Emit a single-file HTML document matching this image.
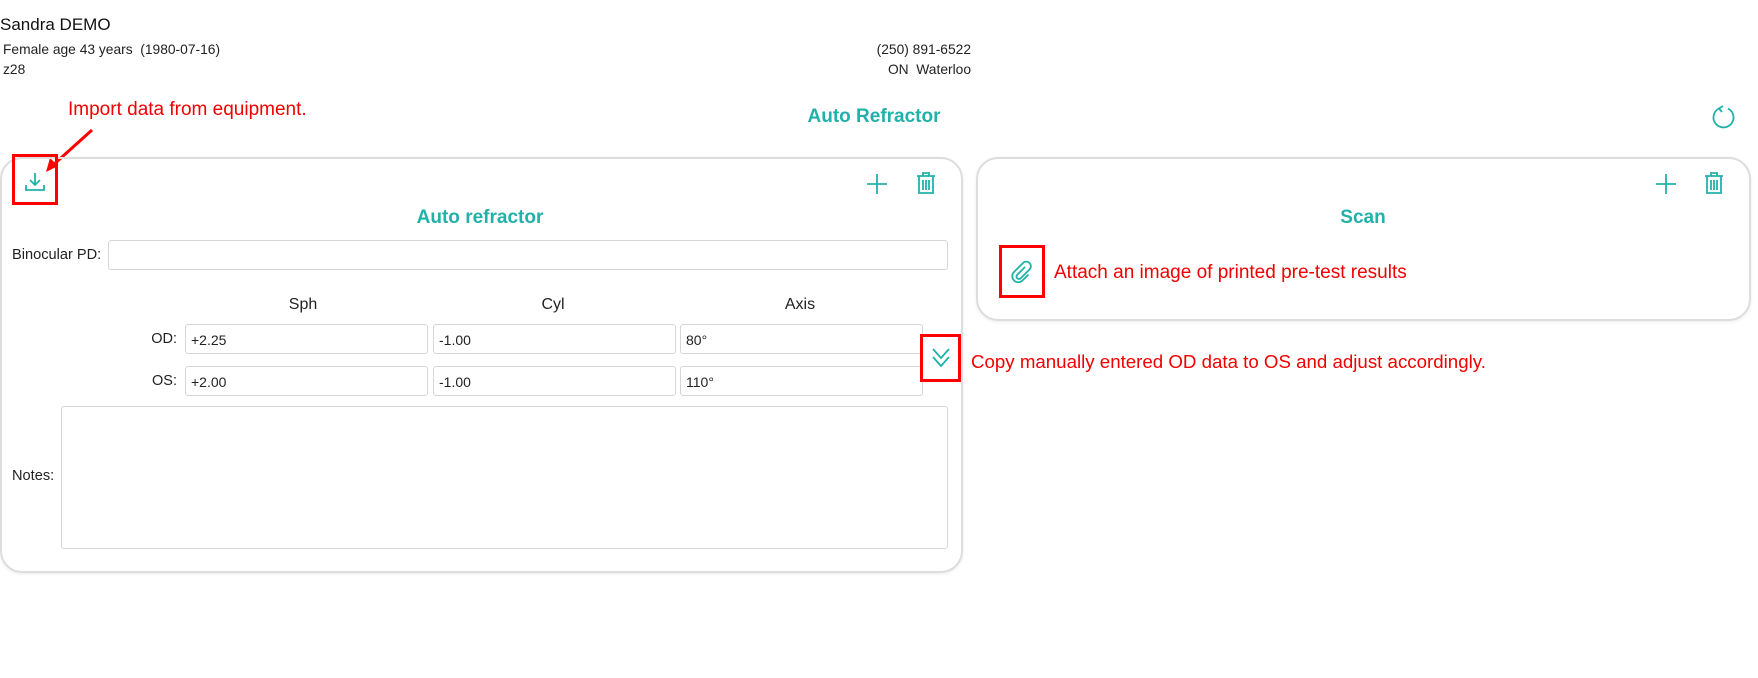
<!DOCTYPE html>
<html><head><meta charset="utf-8"><style>
*{box-sizing:border-box;margin:0;padding:0}
body{width:1758px;height:678px;background:#fff;font-family:"Liberation Sans",sans-serif;color:#222;position:relative;overflow:hidden}
.a{position:absolute;white-space:nowrap}
.teal{color:#20b2aa}
.red{color:#f00000}
.card{position:absolute;border:2px solid #ddd;border-radius:22px;box-shadow:0 1px 3px rgba(0,0,0,.08)}
.inp{position:absolute;border:1px solid #d6d6d6;border-radius:3px;height:30px;font-size:14px;padding:7px 5px;color:#222}
.box{position:absolute;border:3px solid #f00}
</style></head><body>
<div class="a" style="left:0;top:15px;font-size:17px;color:#111">Sandra DEMO</div>
<div class="a" style="left:3px;top:42px;font-size:13.8px">Female age 43 years&nbsp; (1980-07-16)</div>
<div class="a" style="left:3px;top:62px;font-size:13.8px">z28</div>
<div class="a" style="right:787px;top:42px;font-size:13.8px">(250) 891-6522</div>
<div class="a" style="right:787px;top:62px;font-size:13.8px">ON&nbsp; Waterloo</div>
<div class="a red" style="left:68px;top:99px;font-size:19px">Import data from equipment.</div>
<div class="a teal" style="left:874px;top:106px;font-size:19px;font-weight:bold;transform:translateX(-50%)">Auto Refractor</div>
<svg class="a" style="left:1711px;top:104px" width="26" height="26" viewBox="0 0 26 26" fill="none" stroke="#20b2aa" stroke-width="1.8"><path d="M17 4.5A10 10 0 1 1 8 4.5"/><path d="M12 2l-4 2.5 3 3.5"/></svg>
<svg class="a" style="left:0;top:0" width="120" height="200"><path d="M92 130L52 166" stroke="#f00" stroke-width="3"/><path d="M46 172l4-14 8 8z" fill="#f00"/></svg>

<div class="card" style="left:0;top:157px;width:963px;height:416px"></div>
<div class="box" style="left:12px;top:154px;width:46px;height:51px"></div>
<svg class="a" style="left:24px;top:171px" width="22" height="22" viewBox="0 0 22 22" fill="none" stroke="#20b2aa" stroke-width="1.8"><path d="M11 2v12M6 9l5 5 5-5M2 14v5h18v-5"/></svg>
<svg class="a" style="left:866px;top:173px" width="22" height="22" fill="none" stroke="#20b2aa" stroke-width="1.8"><path d="M11 1v20M1 11h20"/></svg>
<svg class="a" style="left:915px;top:171px" width="22" height="24" fill="none" stroke="#20b2aa" stroke-width="1.8"><path d="M2 5h18M8 5V2h6v3M4 5v17h14V5M8 9v10M11 9v10M14 9v10"/></svg>
<div class="a teal" style="left:480px;top:207px;font-size:19px;font-weight:bold;transform:translateX(-50%)">Auto refractor</div>
<div class="a" style="left:12px;top:247px;font-size:14.6px">Binocular PD:</div>
<div class="inp" style="left:108px;top:240px;width:840px"></div>
<div class="a" style="left:303px;top:296px;font-size:16px;transform:translateX(-50%)">Sph</div>
<div class="a" style="left:553px;top:296px;font-size:16px;transform:translateX(-50%)">Cyl</div>
<div class="a" style="left:800px;top:296px;font-size:16px;transform:translateX(-50%)">Axis</div>
<div class="a" style="right:1581px;top:331px;font-size:14.5px">OD:</div>
<div class="a" style="right:1581px;top:373px;font-size:14.5px">OS:</div>
<div class="inp" style="left:185px;top:324px;width:243px">+2.25</div>
<div class="inp" style="left:433px;top:324px;width:243px">-1.00</div>
<div class="inp" style="left:680px;top:324px;width:243px">80°</div>
<div class="inp" style="left:185px;top:366px;width:243px">+2.00</div>
<div class="inp" style="left:433px;top:366px;width:243px">-1.00</div>
<div class="inp" style="left:680px;top:366px;width:243px">110°</div>
<div class="box" style="left:920px;top:334px;width:41px;height:48px;background:#fff"></div>
<svg class="a" style="left:930px;top:346px" width="22" height="24" fill="none" stroke="#20b2aa" stroke-width="1.8"><path d="M3 3l8 9 8-9M3 11l8 9 8-9"/></svg>
<div class="a" style="left:12px;top:468px;font-size:14.6px">Notes:</div>
<div class="inp" style="left:61px;top:406px;width:887px;height:143px"></div>

<div class="card" style="left:976px;top:157px;width:775px;height:164px"></div>
<svg class="a" style="left:1655px;top:173px" width="22" height="22" fill="none" stroke="#20b2aa" stroke-width="1.8"><path d="M11 1v20M1 11h20"/></svg>
<svg class="a" style="left:1703px;top:171px" width="22" height="24" fill="none" stroke="#20b2aa" stroke-width="1.8"><path d="M2 5h18M8 5V2h6v3M4 5v17h14V5M8 9v10M11 9v10M14 9v10"/></svg>
<div class="a teal" style="left:1363px;top:207px;font-size:19px;font-weight:bold;transform:translateX(-50%)">Scan</div>
<div class="box" style="left:999px;top:245px;width:46px;height:53px"></div>
<svg class="a" style="left:1010px;top:260px" width="24" height="24" viewBox="0 0 24 24" fill="none" stroke="#20b2aa" stroke-width="1.8"><path d="M15 7l-8 8a2.5 2.5 0 0 0 3.5 3.5l9-9a4.5 4.5 0 0 0-6.5-6.5l-9 9a6 6 0 0 0 8.5 8.5l6-6"/></svg>
<div class="a red" style="left:1054px;top:262px;font-size:19px">Attach an image of printed pre-test results</div>
<div class="a red" style="left:971px;top:351px;font-size:18.7px">Copy manually entered OD data to OS and adjust accordingly.</div>
</body></html>
